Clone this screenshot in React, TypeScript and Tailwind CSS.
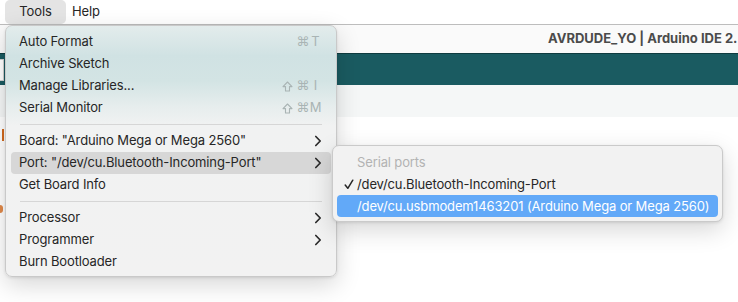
import React from "react";

type Item =
  | { kind: "sep" }
  | { kind: "item"; label: string; shift?: boolean; keyChar?: string; sub?: boolean; active?: boolean };

const items: Item[] = [
  { kind: "item", label: "Auto Format", keyChar: "T" },
  { kind: "item", label: "Archive Sketch" },
  { kind: "item", label: "Manage Libraries...", shift: true, keyChar: "I" },
  { kind: "item", label: "Serial Monitor", shift: true, keyChar: "M" },
  { kind: "sep" },
  { kind: "item", label: 'Board: "Arduino Mega or Mega 2560"', sub: true },
  { kind: "item", label: 'Port: "/dev/cu.Bluetooth-Incoming-Port"', sub: true, active: true },
  { kind: "item", label: "Get Board Info" },
  { kind: "sep" },
  { kind: "item", label: "Processor", sub: true },
  { kind: "item", label: "Programmer", sub: true },
  { kind: "item", label: "Burn Bootloader" },
];

function Chevron() {
  return (
    <svg width="8" height="12" viewBox="0 0 8 12" className="text-[#2a2a2a]">
      <path d="M1.8 1.5 L6.2 6 L1.8 10.5" fill="none" stroke="currentColor" strokeWidth="1.7" strokeLinecap="round" strokeLinejoin="round" />
    </svg>
  );
}

function Check() {
  return (
    <svg width="10" height="11" viewBox="0 0 10 11" className="text-[#262626]">
      <path d="M1.2 6 L3.8 9.3 L8.8 1.2" fill="none" stroke="currentColor" strokeWidth="1.5" strokeLinecap="round" strokeLinejoin="round" />
    </svg>
  );
}

function ShiftKey() {
  return (
    <svg width="11" height="11" viewBox="0 0 11 11" className="mr-[3px]">
      <path d="M5.5 1 L10 5.6 L7.5 5.6 L7.5 10 L3.5 10 L3.5 5.6 L1 5.6 Z" fill="none" stroke="currentColor" strokeWidth="1.1" strokeLinejoin="round" />
    </svg>
  );
}

export default function App() {
  return (
    <div className="relative w-[738px] h-[302px] overflow-hidden bg-white font-['Inter','Liberation_Sans',sans-serif] text-[13px] tracking-[-0.13px] text-[#262626] antialiased">
      {/* menu bar */}
      <div className="h-[25px] flex items-start border-b border-[#bdbdbd]">
        <div className="ml-[5px] h-[24px] w-[61px] rounded-[5px] bg-[#e4e4e4] flex items-center justify-center">Tools</div>
        <div className="h-[24px] ml-[6px] flex items-center">Help</div>
      </div>

      {/* window title */}
      <div className="h-[28px] bg-[#fafafa] flex items-center pl-[548px] whitespace-nowrap overflow-hidden font-bold tracking-normal text-[#4b4b4b]">
        AVRDUDE_YO | Arduino IDE 2.
      </div>
      <div className="h-px bg-[#0f3c40]" />
      <div className="h-[31px] bg-[#1a5b61] flex items-center">
        <div className="h-[22px] w-[4px] border border-l-0 border-[#d0d0d0] bg-white" />
      </div>
      <div className="h-[32px] bg-[#f5f7f7]" />
      <div className="flex flex-col">
        <div className="mt-[12px] ml-[2px] h-[12px] w-[2px] bg-[#d2691e]" />
        <div className="mt-[64px] ml-0 h-[8px] w-[3px] rounded-r-full bg-[#e0894a]" />
      </div>

      {/* Tools menu */}
      <div className="absolute left-[5px] top-[25px] w-[332px] h-[252px] rounded-[7px] border border-[#c9c9c9] shadow-[0_8px_24px_rgba(0,0,0,0.16),0_1px_3px_rgba(0,0,0,0.1)] bg-[linear-gradient(to_bottom,#e3ecec_0%,#d0e2e3_12%,#d3e4e4_22%,#e6eded_32%,#f1f2f2_40%,#f2f2f2_100%)] px-[5px] pt-[5px] pb-[3px] flex flex-col">
        {items.map((it, i) =>
          it.kind === "sep" ? (
            <div key={i} className="h-[11px] flex items-center px-[9px]">
              <div className="h-px w-full bg-[#d6d6d6]" />
            </div>
          ) : (
            <div
              key={i}
              className={`h-[22px] flex items-center pl-[8px] pr-[9px] rounded-[4px] ${it.active ? "bg-[#d7d7d7]" : ""}`}
            >
              <span className="flex-1 whitespace-nowrap">{it.label}</span>
              {it.keyChar && (
                <span className="flex items-center text-[#a9b4b4]">
                  {it.shift && <ShiftKey />}
                  <span className="font-['DejaVu_Sans',sans-serif] text-[13px]">⌘</span>
                  <span className="w-[13px] text-center text-[13px]">{it.keyChar}</span>
                </span>
              )}
              {it.sub && <Chevron />}
            </div>
          )
        )}
      </div>

      {/* Port submenu */}
      <div className="absolute left-[332px] top-[145px] w-[391px] h-[77px] rounded-[7px] border border-[#cacaca] bg-[#f2f2f2] shadow-[0_8px_24px_rgba(0,0,0,0.16),0_1px_3px_rgba(0,0,0,0.1)] px-[4px] pt-[5px] pb-[4px] flex flex-col">
        <div className="h-[22px] flex items-center pl-[20px] pt-[2px] text-[#b3b3b3]">Serial ports</div>
        <div className="h-[22px] flex items-center pl-[7px] pt-px">
          <span className="w-[13px] flex items-center"><Check /></span>
          <span>/dev/cu.Bluetooth-Incoming-Port</span>
        </div>
        <div className="h-[22px] flex items-center pl-[20px] pt-px rounded-[4px] bg-[#62a9f8] text-white">
          /dev/cu.usbmodem1463201 (Arduino Mega or Mega 2560)
        </div>
      </div>
    </div>
  );
}
